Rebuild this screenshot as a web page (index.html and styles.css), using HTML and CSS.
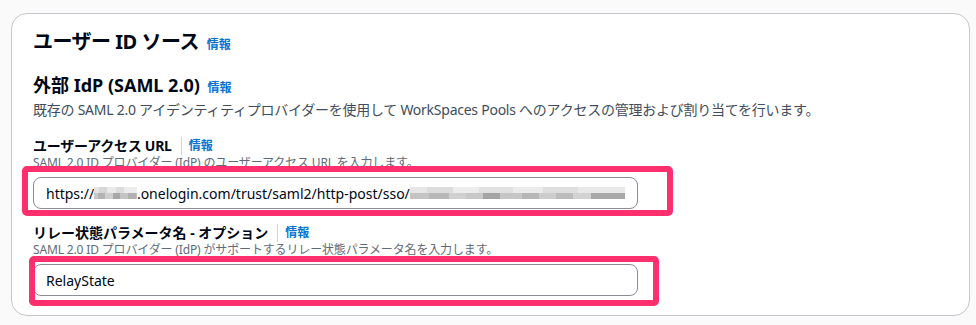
FILE: index.html
```html
<!DOCTYPE html>
<html lang="ja">
<head>
  <meta charset="UTF-8">
  <meta name="viewport" content="width=device-width, initial-scale=1.0">
  <title>ユーザー ID ソース</title>
  <link rel="stylesheet" href="styles.css">
</head>
<body>
  <div class="container">
    <div class="card">
      <h2 class="card-title">ユーザー ID ソース <a class="info" href="#">情報</a></h2>

      <h3 class="section-title">外部 IdP (SAML 2.0) <a class="info" href="#">情報</a></h3>
      <p class="section-desc">既存の SAML 2.0 アイデンティティプロバイダーを使用して WorkSpaces Pools へのアクセスの管理および割り当てを行います。</p>

      <div class="field">
        <div class="field-label">
          <span class="label-tight">ユーザーアクセス URL</span>
          <span class="divider"></span>
          <a class="info" href="#">情報</a>
        </div>
        <div class="field-hint">SAML 2.0 ID プロバイダー (IdP) のユーザーアクセス URL を入力します。</div>
        <div class="input-wrap">
          <div class="input">https://<span class="mosaic mosaic-short"></span>.onelogin.com/trust/saml2/http-post/sso/<span class="mosaic mosaic-long"></span></div>
          <div class="highlight highlight-url"></div>
        </div>
      </div>

      <div class="field">
        <div class="field-label">
          <span>リレー状態パラメータ名 - オプション</span>
          <span class="divider"></span>
          <a class="info" href="#">情報</a>
        </div>
        <div class="field-hint">SAML 2.0 ID プロバイダー (IdP) がサポートするリレー状態パラメータ名を入力します。</div>
        <div class="input-wrap">
          <div class="input">RelayState</div>
          <div class="highlight highlight-relay"></div>
        </div>
      </div>
    </div>
  </div>
</body>
</html>
```

FILE: styles.css
```css
body {
  font-family: 'Noto Sans', 'Noto Sans CJK JP', sans-serif;
  margin: 0;
  padding: 0;
  background-color: #fafafa;
  color: #000716;
}

.container {
  padding: 13px 6px 0 11px;
}

.card {
  background-color: white;
  border: 1px solid #c6c6cd;
  border-radius: 16px;
  padding: 14px 20px 19px 21px;
  height: 268px;
}

.card-title {
  margin: 0;
  font-size: 20px;
  line-height: 28px;
  font-weight: 700;
  letter-spacing: -0.5px;
}

.info {
  color: #0972d3;
  font-size: 12px;
  font-weight: 700;
  text-decoration: none;
  letter-spacing: 0;
  margin-left: 3px;
}

.section-title {
  margin: 15px 0 0 0;
  font-size: 18px;
  line-height: 22px;
  font-weight: 700;
}

.section-desc {
  margin: 1px 0 0 0;
  font-size: 14px;
  line-height: 20px;
  color: #414d5c;
  letter-spacing: -0.25px;
}

.field {
  margin-top: 17px;
}

.field + .field {
  margin-top: 15px;
}

.field-label {
  display: flex;
  align-items: center;
  font-size: 14px;
  line-height: 18px;
  font-weight: 700;
}

.label-tight {
  letter-spacing: -0.25px;
}

.field-label .info {
  margin-left: 0;
}

.divider {
  width: 1px;
  height: 18px;
  background-color: #d1d5db;
  margin: 0 7px 0 9px;
}

.field-hint {
  font-size: 12px;
  line-height: 16px;
  color: #5f6b7a;
  letter-spacing: -0.15px;
}

.input-wrap {
  position: relative;
  width: 605px;
  margin-top: 6px;
}

.input {
  height: 30px;
  border: 1px solid #8c8c94;
  border-radius: 8px;
  padding: 0 12px;
  display: flex;
  align-items: center;
  font-size: 14px;
  color: #000716;
  white-space: nowrap;
}

.mosaic {
  display: inline-block;
  height: 12px;
  vertical-align: middle;
  filter: blur(0.6px);
  background:
    linear-gradient(90deg, #e4e4e4 0 12%, #d6d6d6 12% 30%, #e9e9e9 30% 52%, #dcdcdc 52% 70%, #ececec 70% 100%) top / 100% 50% no-repeat,
    linear-gradient(90deg, #c8c8c8 0 10%, #b4b4b4 10% 26%, #cfcfcf 26% 44%, #a8a8a8 44% 62%, #c4c4c4 62% 80%, #b0b0b0 80% 100%) bottom / 100% 50% no-repeat;
}

.mosaic-short {
  width: 43px;
}

.mosaic-long {
  width: 217px;
  background:
    linear-gradient(90deg, #e6e6e6 0 8%, #dcdcdc 8% 20%, #ececec 20% 32%, #e0e0e0 32% 48%, #ebebeb 48% 62%, #dedede 62% 78%, #e8e8e8 78% 100%) top / 100% 50% no-repeat,
    linear-gradient(90deg, #c4c4c4 0 9%, #b8b8b8 9% 18%, #d0d0d0 18% 26%, #c8c8c8 26% 34%, #a4a4a4 34% 42%, #c6c6c6 42% 52%, #b6b6b6 52% 60%, #cccccc 60% 68%, #bcbcbc 68% 76%, #d2d2d2 76% 84%, #a8a8a8 84% 100%) bottom / 100% 50% no-repeat;
}

.highlight {
  position: absolute;
  border: 6px solid #ff2e6c;
  border-radius: 5px;
  pointer-events: none;
}

.highlight-url {
  left: -11px;
  top: -11px;
  right: -35px;
  bottom: -7px;
}

.highlight-relay {
  left: -4px;
  top: -8px;
  right: -21px;
  bottom: -10px;
}
```
